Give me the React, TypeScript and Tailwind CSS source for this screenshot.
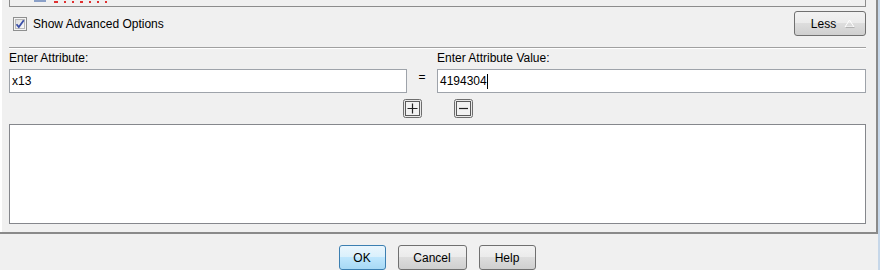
import React from "react";

const font = { fontFamily: '"Liberation Sans", Arial, sans-serif' };

function CheckBox() {
  return (
    <svg width="14" height="14" viewBox="0 0 14 14" className="shrink-0">
      <defs>
        <linearGradient id="cbg" x1="0" y1="0" x2="1" y2="1">
          <stop offset="0" stopColor="#dcdcdc" />
          <stop offset="1" stopColor="#fbfbfb" />
        </linearGradient>
      </defs>
      <rect x="0.5" y="0.5" width="13" height="13" fill="#f4f4f4" stroke="#8e8f8f" />
      <rect x="2.5" y="2.5" width="9" height="9" fill="url(#cbg)" stroke="#b9b9b9" />
      <path d="M3.5 7.2 L5.8 10 L10.8 3.2" fill="none" stroke="#3a4fa8" strokeWidth="1.8" />
    </svg>
  );
}

function SmallIconButton({ minus }: { minus?: boolean }) {
  return (
    <button className="w-[19px] h-[19px] p-0 flex items-center justify-center">
      <svg width="19" height="19" viewBox="0 0 19 19">
        <rect x="0.5" y="0.5" width="18" height="18" rx="2" fill="#e9e9e9" stroke="#6d6d6d" />
        <rect x="2.5" y="2.5" width="14" height="14" fill="#f2f2f2" stroke="#5a5a5a" />
        {minus ? (
          <path d="M5 9.5 H14" stroke="#222" strokeWidth="1.2" />
        ) : (
          <path d="M4.5 9.5 H14.5 M9.5 4.5 V14.5" stroke="#222" strokeWidth="1.2" />
        )}
      </svg>
    </button>
  );
}

function WinButton({
  children,
  className = "",
  focused,
}: {
  children: React.ReactNode;
  className?: string;
  focused?: boolean;
}) {
  return (
    <button
      className={
        "h-[25px] rounded-[3px] border text-[12px] text-black flex items-center justify-center " +
        (focused
          ? "border-[#3c7fb1] bg-[linear-gradient(#eaf6fd_0%,#d9f0fc_50%,#bee6fd_50%,#a7d9f5_100%)] "
          : "border-[#707070] bg-[linear-gradient(#f2f2f2_0%,#ebebeb_50%,#dddddd_50%,#cfcfcf_100%)] ") +
        className
      }
      style={font}
    >
      {children}
    </button>
  );
}

export default function App() {
  return (
    <div className="w-[880px] h-[270px] overflow-hidden bg-[#f0f0f0] flex text-[12px] text-black" style={font}>
      <div className="flex-1 flex flex-col">
        {/* main panel */}
        <div className="flex h-[236px] border-b-2 border-[#8a8a8a]">
          <div className="w-[2px] bg-white" />
          <div className="flex-1 pl-[7px] pr-[10px] flex flex-col">
            {/* bottom edge of the box above, its content scrolled out of view */}
            <div className="h-[7px] border-x border-b border-[#8c8c8c] flex items-start gap-[8px] pl-[24px]">
              <span className="w-[12px] h-[2px] bg-[#8aa0c8]" />
              <span className="flex gap-[6px] pt-px">
                <span className="w-[4px] h-[2px] bg-[#e03030]" />
                <span className="w-[2px] h-[2px] bg-[#e03030]" />
                <span className="w-[2px] h-[2px] bg-[#e03030]" />
                <span className="w-[3px] h-[2px] bg-[#e03030]" />
                <span className="w-[2px] h-[2px] bg-[#e03030]" />
                <span className="w-[2px] h-[2px] bg-[#e03030]" />
                <span className="w-[2px] h-[2px] bg-[#e03030]" />
              </span>
            </div>

            <div className="mt-[4px] h-[25px] flex items-center justify-between">
              <label className="flex items-center gap-[6px] pl-[4px]">
                <CheckBox />
                <span className="leading-[14px]">Show Advanced Options</span>
              </label>
              <WinButton className="w-[72px] gap-[8px] pl-[6px]">
                <span>Less</span>
                <svg width="11" height="9" viewBox="0 0 11 9">
                  <path d="M1 8 L5.5 1 L10 8 Z" fill="none" stroke="#fff" strokeWidth="1" />
                  <path d="M1.5 8.5 H10.5" stroke="#b0b0b0" strokeWidth="1" />
                </svg>
              </WinButton>
            </div>

            <div className="mt-[11px] border-t border-[#a0a0a0] border-b border-b-white" />

            <div className="mt-[2px] grid grid-cols-[398px_30px_1fr]">
              <div className="leading-[14px]">Enter Attribute:</div>
              <div />
              <div className="leading-[14px]">Enter Attribute Value:</div>

              <div className="mt-[4px] h-[24px] border border-[#9ea3aa] bg-white flex items-center pl-[2px]">
                x13
              </div>
              <div className="mt-[4px] flex justify-center pt-[1px] leading-[14px]">=</div>
              <div className="mt-[4px] h-[24px] border border-[#9ea3aa] bg-white flex items-center pl-[2px]">
                4194304
                <span className="inline-block w-px h-[15px] bg-black" />
              </div>
            </div>

            <div className="mt-[6px] flex justify-center gap-[32px]">
              <SmallIconButton />
              <SmallIconButton minus />
            </div>

            <div className="mt-[6px] h-[100px] border border-[#85878c] bg-white" />
          </div>
          <div className="w-[2px] bg-[#8a8a8a]" />
        </div>

        {/* footer buttons */}
        <div className="flex justify-center gap-[12px] pt-[11px] pr-[4px]">
          <WinButton focused className="w-[47px]">
            OK
          </WinButton>
          <WinButton className="w-[69px]">Cancel</WinButton>
          <WinButton className="w-[57px]">Help</WinButton>
        </div>
      </div>
      <div className="w-[2px] bg-[#c6d7e9]" />
    </div>
  );
}
